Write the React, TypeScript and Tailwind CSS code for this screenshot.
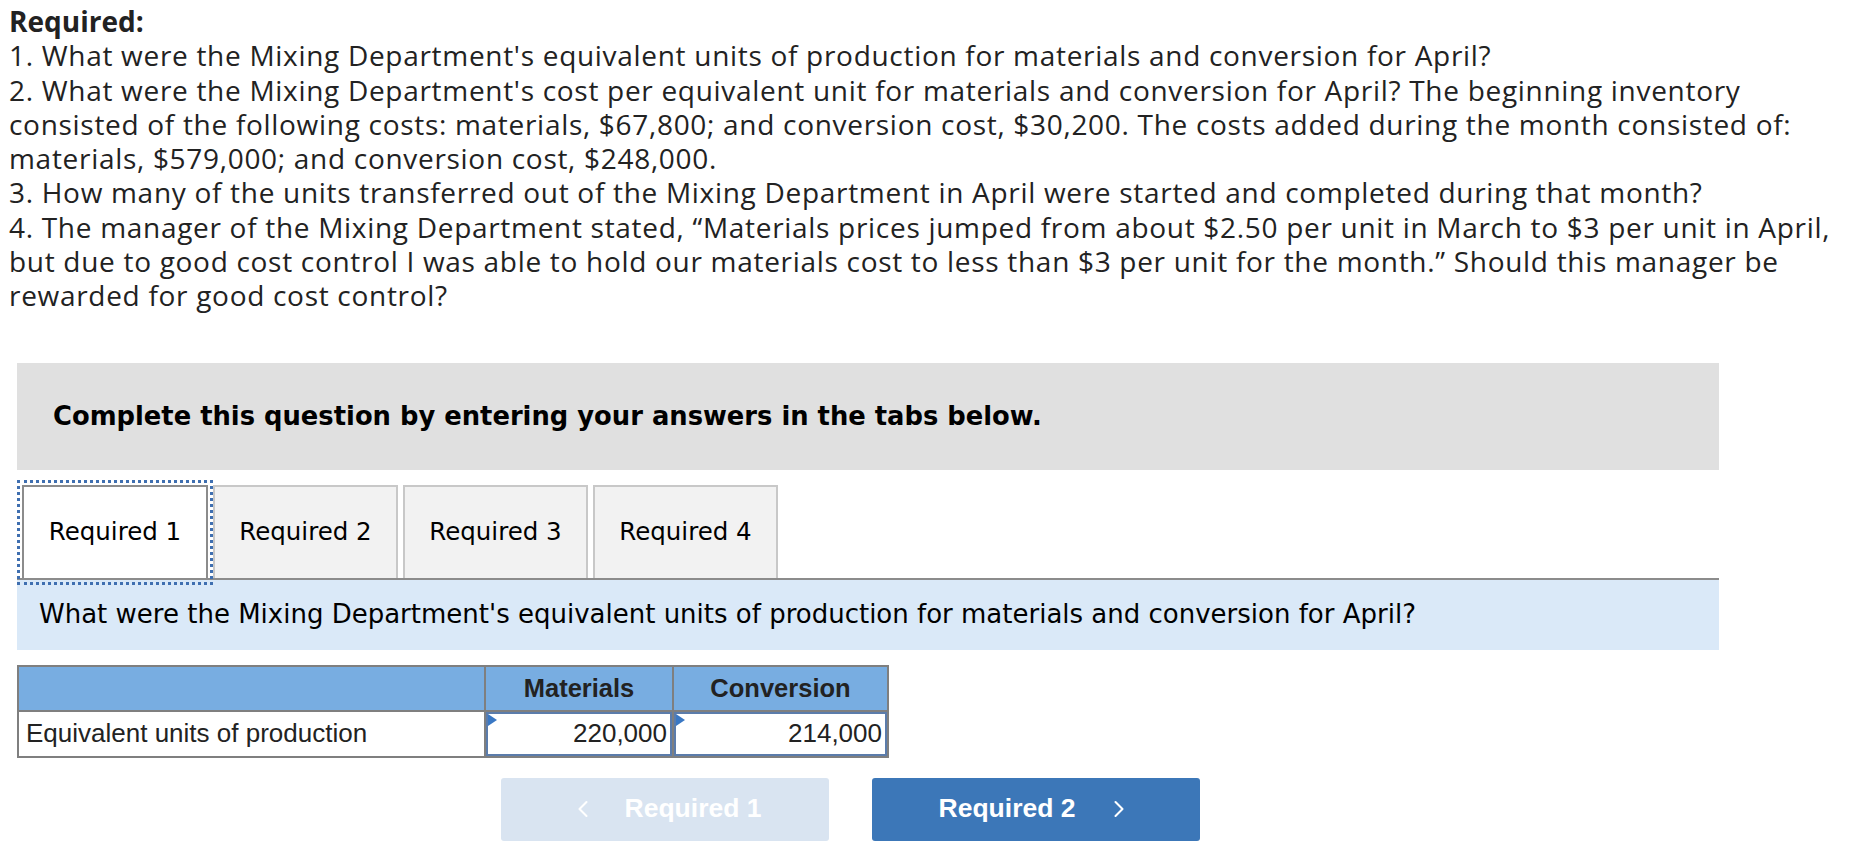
import { ChevronLeft, ChevronRight } from "lucide-react";

const lines = [
  "1. What were the Mixing Department's equivalent units of production for materials and conversion for April?",
  "2. What were the Mixing Department's cost per equivalent unit for materials and conversion for April? The beginning inventory",
  "consisted of the following costs: materials, $67,800; and conversion cost, $30,200. The costs added during the month consisted of:",
  "materials, $579,000; and conversion cost, $248,000.",
  "3. How many of the units transferred out of the Mixing Department in April were started and completed during that month?",
  "4. The manager of the Mixing Department stated, \u201cMaterials prices jumped from about $2.50 per unit in March to $3 per unit in April,",
  "but due to good cost control I was able to hold our materials cost to less than $3 per unit for the month.\u201d Should this manager be",
  "rewarded for good cost control?",
];

const tabs = ["Required 1", "Required 2", "Required 3", "Required 4"];

function ValueCell({ value }: { value: string }) {
  return (
    <td className="relative p-0 border-2 border-[#7f7f7f]">
      <div className="relative h-[44px] border-2 border-[#5b7cab] flex items-center justify-end pr-[3px]">
        <span className="absolute left-0 top-0 w-0 h-0 border-t-[6px] border-b-[6px] border-l-[9px] border-t-transparent border-b-transparent border-l-[#3a78c4]" />
        {value}
      </div>
    </td>
  );
}

export default function App() {
  return (
    <div className="w-[1863px] h-[858px] bg-white text-[#222] overflow-hidden">
      <div className="pl-[9px] pt-[4px] font-['Open_Sans',sans-serif] text-[28px] leading-[34.3px] tracking-[0.7px] whitespace-nowrap">
        <p className="font-bold tracking-[0px]">Required:</p>
        {lines.map((l, i) => (
          <p key={i}>{l}</p>
        ))}
      </div>

      <div className="ml-[17px] w-[1702px]">
        <div className="mt-[50px] h-[107px] bg-[#e0e0e0] flex items-center pl-[36px] font-['DejaVu_Sans',sans-serif] font-bold text-[25.8px] text-black">
          Complete this question by entering your answers in the tabs below.
        </div>

        <div className="mt-[15px] flex gap-[5px] border-b-2 border-[#8c8c8c] font-['DejaVu_Sans',sans-serif] text-[24.5px] text-black">
          {tabs.map((t, i) => (
            <div
              key={t}
              className={
                i === 0
                  ? "ml-[5px] -mb-[2px] w-[186px] h-[95px] flex items-center justify-center bg-white border-2 border-[#8c8c8c] outline-dotted outline-[3px] outline-offset-[2px] outline-[#3f6fb0]"
                  : "w-[185px] h-[93px] flex items-center justify-center bg-[#f2f2f2] border-2 border-b-0 border-[#c8c8c8]"
              }
            >
              {t}
            </div>
          ))}
        </div>

        <div className="h-[70px] bg-[#dae9f8] flex items-center pl-[22px] font-['DejaVu_Sans',sans-serif] text-[26px] text-black">
          What were the Mixing Department's equivalent units of production for materials and conversion for April?
        </div>

        <table className="mt-[15px] border-collapse font-['Liberation_Sans',Arial,sans-serif] text-[26px] text-[#222]">
          <thead>
            <tr className="bg-[#78ade1] h-[45px]">
              <th className="w-[467px] border-2 border-[#7f7f7f]" />
              <th className="w-[188px] border-2 border-[#7f7f7f] font-bold text-[25.5px] text-center">Materials</th>
              <th className="w-[215px] border-2 border-[#7f7f7f] font-bold text-[25.5px] text-center">Conversion</th>
            </tr>
          </thead>
          <tbody>
            <tr>
              <td className="border-2 border-[#7f7f7f] pl-[7px] h-[46px]">Equivalent units of production</td>
              <ValueCell value="220,000" />
              <ValueCell value="214,000" />
            </tr>
          </tbody>
        </table>

        <div className="mt-[20px] ml-[484px] flex gap-[43px] font-['Liberation_Sans',Arial,sans-serif] font-bold text-[26.5px] text-white">
          <button className="w-[328px] h-[63px] rounded-[3px] bg-[#d9e4f1] flex items-center justify-center gap-[28px]">
            <ChevronLeft className="w-[28px] h-[28px]" strokeWidth={1.8} />
            Required 1
          </button>
          <button className="w-[328px] h-[63px] rounded-[3px] bg-[#3c77b8] flex items-center justify-center gap-[30px]">
            Required 2
            <ChevronRight className="w-[28px] h-[28px]" strokeWidth={1.8} />
          </button>
        </div>
      </div>
    </div>
  );
}
